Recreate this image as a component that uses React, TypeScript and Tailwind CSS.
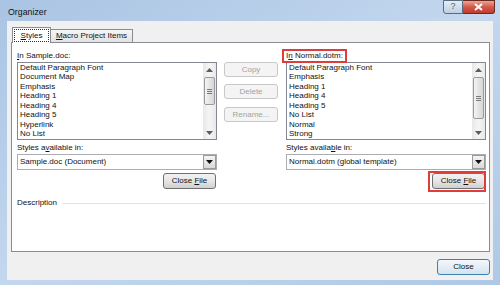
import React from 'react';

const leftItems = ['Default Paragraph Font', 'Document Map', 'Emphasis', 'Heading 1', 'Heading 4', 'Heading 5', 'Hyperlink', 'No List'];
const rightItems = ['Default Paragraph Font', 'Emphasis', 'Heading 1', 'Heading 4', 'Heading 5', 'No List', 'Normal', 'Strong'];

const Ul = ({ children }: { children: React.ReactNode }) => (
  <span className="underline decoration-1 underline-offset-[1px]">{children}</span>
);

const ArrowUp = () => (
  <svg width="7" height="4" viewBox="0 0 7 4">
    <path d="M0 4 L3.5 0 L7 4 Z" fill="#5c5c5c" />
  </svg>
);

const ArrowDown = ({ color = '#5c5c5c' }: { color?: string }) => (
  <svg width="7" height="4" viewBox="0 0 7 4">
    <path d="M0 0 L7 0 L3.5 4 Z" fill={color} />
  </svg>
);

// thumb height differs per list, so the class is passed in full
const ScrollBar = ({ thumbClass }: { thumbClass: string }) => (
  <div className="w-[13px] h-full flex flex-col bg-gradient-to-r from-[#e8e8e8] via-[#f5f5f5] to-[#e8e8e8]">
    <div className="h-[13px] flex items-center justify-center">
      <ArrowUp />
    </div>
    <div className="flex-1 pt-px">
      <div className={`${thumbClass} mx-[1px] rounded-[2px] border border-[#9a9a9a] bg-gradient-to-r from-[#f4f4f4] to-[#d6d6d6] flex flex-col items-center justify-center gap-[1px]`}>
        <div className="w-[5px] h-px bg-[#7a7a7a]" />
        <div className="w-[5px] h-px bg-[#7a7a7a]" />
        <div className="w-[5px] h-px bg-[#7a7a7a]" />
      </div>
    </div>
    <div className="h-[13px] flex items-center justify-center">
      <ArrowDown />
    </div>
  </div>
);

const ListBox = ({ items, thumbClass }: { items: string[]; thumbClass: string }) => (
  <div className="mt-px h-[78px] border border-[#828790] bg-white flex">
    <ul className="flex-1 pl-[2px] leading-[9.45px]">
      {items.map((item) => (
        <li key={item}>{item}</li>
      ))}
    </ul>
    <ScrollBar thumbClass={thumbClass} />
  </div>
);

const Combo = ({ value }: { value: string }) => (
  <div className="mt-px h-[16px] border border-[#abadb3] bg-white flex items-center">
    <span className="flex-1 pl-[2px]">{value}</span>
    <div className="w-[13px] h-[14px] border border-[#9a9a9a] bg-gradient-to-b from-[#f4f4f4] to-[#d9d9d9] flex items-center justify-center">
      <ArrowDown color="#111" />
    </div>
  </div>
);

const CloseFile = () => (
  <div className="h-[16px] w-[53px] rounded-[3px] border border-[#707070] bg-gradient-to-b from-[#f2f2f2] via-[#e6e6e6] to-[#d0d0d0] flex items-center justify-center">
    <span>
      Close <Ul>F</Ul>ile
    </span>
  </div>
);

const Disabled = ({ children }: { children: React.ReactNode }) => (
  <div className="h-[15px] w-[54px] rounded-[3px] border border-[#c8c8c8] bg-[#f4f4f4] text-[#a3a3a3] flex items-center justify-center">
    {children}
  </div>
);

export default function App() {
  return (
    <div className="w-[500px] h-[285px] overflow-hidden flex flex-col bg-gradient-to-br from-[#a9c4e3] via-[#c3d7ee] to-[#aec8e6] text-[8px] text-[#111] font-['Liberation_Sans',Arial,sans-serif] whitespace-nowrap">
      {/* title bar */}
      <div className="h-[21px] flex items-start">
        <div className="pl-[8px] pt-[6px] text-[8.8px] text-[#111]">Organizer</div>
        <div className="ml-auto mr-[5px] flex">
          <div className="w-[20px] h-[14px] rounded-bl-[3px] border border-[#5a6b80] bg-gradient-to-b from-[#e3edf7] to-[#bccfe4] flex items-center justify-center text-[9px] text-[#55606e]">
            ?
          </div>
          <div className="w-[32px] h-[14px] rounded-br-[3px] border border-l-0 border-[#6a2a22] bg-gradient-to-b from-[#e9a597] via-[#d2584a] to-[#c23a2c] flex items-center justify-center">
            <svg width="9" height="8" viewBox="0 0 9 8">
              <path d="M1 1 L8 7 M8 1 L1 7" stroke="#fff" strokeWidth="2" />
            </svg>
          </div>
        </div>
      </div>

      {/* client area */}
      <div className="mx-[7px] h-[259px] bg-[#f0f0f0] pl-[4px] pr-[3px] pt-[6px] flex flex-col">
        <div className="h-[16px] -mb-px relative z-10 pl-[1px] flex items-end">
          <div className="h-[16px] w-[39px] border-l border-t border-r border-[#898c95] bg-white p-[1px]">
            <div className="h-full border border-dotted border-[#333] flex items-center justify-center">
              <span>
                <Ul>S</Ul>tyles
              </span>
            </div>
          </div>
          <div className="h-[13px] mb-px w-[82px] border-t border-r border-[#898c95] bg-gradient-to-b from-[#f6f6f6] to-[#e2e2e2] flex items-center justify-center">
            <span>
              <Ul>M</Ul>acro Project Items
            </span>
          </div>
        </div>

        <div className="h-[210px] border border-[#898c95] bg-white pl-[5px] pr-[3px] pt-[8px] flex flex-col">
          <div className="flex">
            {/* left column */}
            <div className="w-[200px] flex flex-col">
              <div className="h-[10px] leading-[10px]">
                <Ul>I</Ul>n Sample.doc:
              </div>
              <ListBox items={leftItems} thumbClass="h-[28px]" />
              <div className="mt-[3px] h-[10px] leading-[10px]">
                Styles a<Ul>v</Ul>ailable in:
              </div>
              <Combo value="Sample.doc (Document)" />
              <div className="mt-[3px] mr-px self-end">
                <CloseFile />
              </div>
            </div>

            {/* middle buttons */}
            <div className="ml-[7px] w-[54px] pt-[11px] flex flex-col">
              <Disabled>Copy</Disabled>
              <div className="mt-[7px]">
                <Disabled>Delete</Disabled>
              </div>
              <div className="mt-[8px]">
                <Disabled>Rename...</Disabled>
              </div>
            </div>

            {/* right column */}
            <div className="ml-[8px] w-[200px] flex flex-col">
              <div className="relative h-[10px] leading-[10px]">
                I<Ul>n</Ul> Normal.dotm:
                <div className="absolute -left-[4px] -top-[2px] w-[65px] h-[14px] border-2 border-[#e03c3c]" />
              </div>
              <ListBox items={rightItems} thumbClass="h-[42px]" />
              <div className="mt-[3px] h-[10px] leading-[10px]">
                Styles availa<Ul>b</Ul>le in:
              </div>
              <Combo value="Normal.dotm (global template)" />
              <div className="relative mt-[3px] mr-px self-end">
                <CloseFile />
                <div className="absolute -left-[4px] -top-[2px] -right-[1px] -bottom-[3px] border-2 border-[#e03c3c]" />
              </div>
            </div>
          </div>

          <div className="mt-[9px] h-[10px] flex items-center">
            <span>Description</span>
            <div className="ml-[6px] flex-1 h-px bg-[#dde3e8]" />
          </div>
        </div>

        <div className="mt-[7px] flex justify-end">
          <div className="h-[16px] w-[53px] rounded-[3px] border border-[#3c7fb1] bg-gradient-to-b from-[#f3f8fc] via-[#e4eef6] to-[#d3e3ef] flex items-center justify-center">
            Close
          </div>
        </div>
      </div>
    </div>
  );
}
